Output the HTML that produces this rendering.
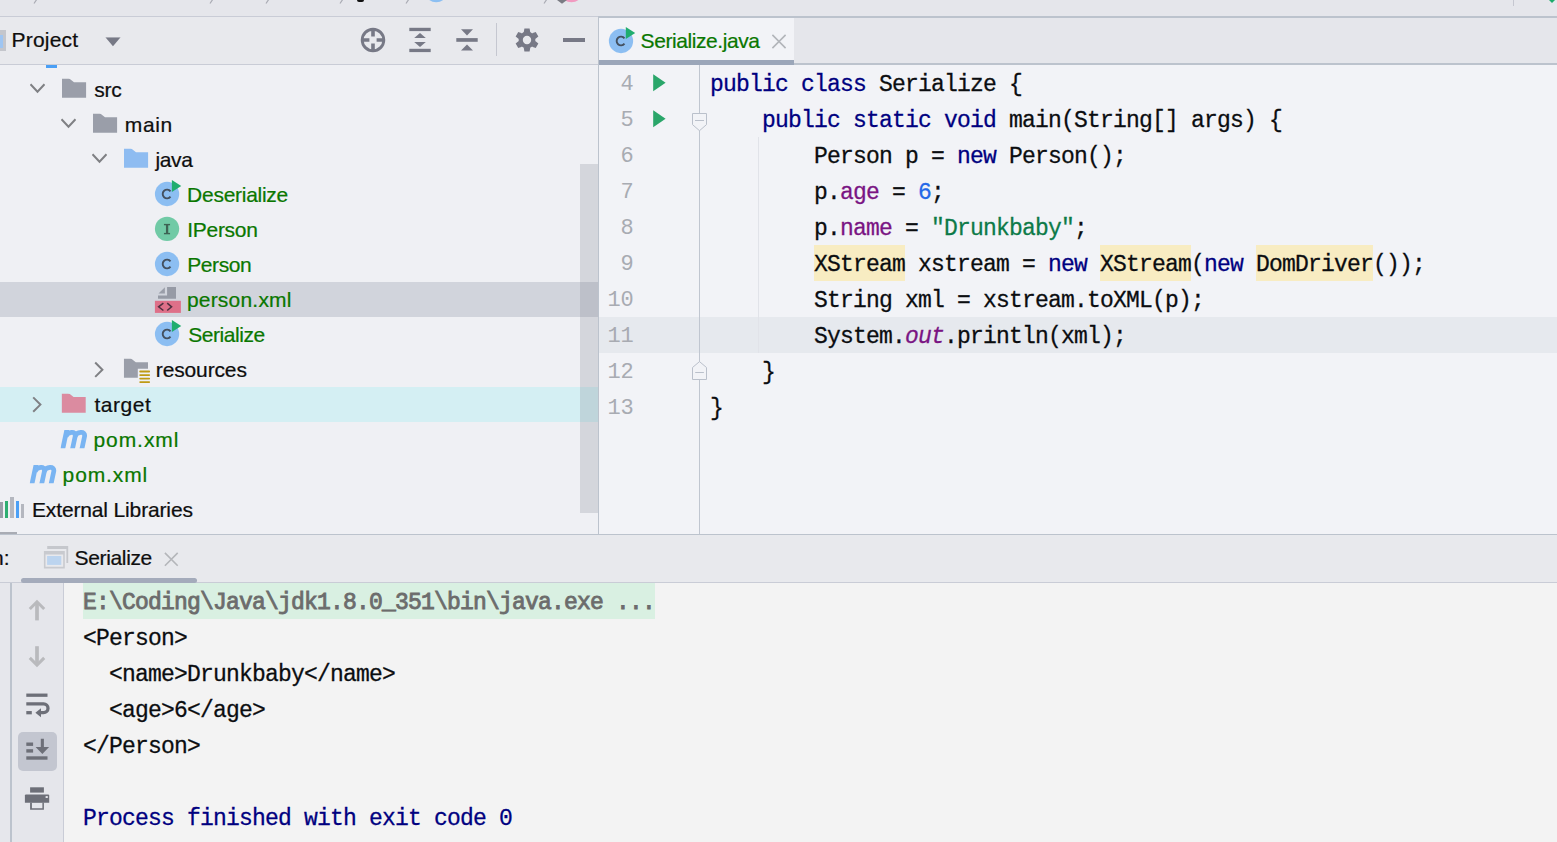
<!DOCTYPE html>
<html><head><meta charset="utf-8"><title>Serialize.java</title>
<style>
html,body{margin:0;padding:0}
body{width:1557px;height:842px;position:relative;overflow:hidden;background:#eff0f4;font-family:"Liberation Sans", sans-serif}
.r{position:absolute;display:block}
.t{position:absolute;white-space:pre;margin:0}
.s{font-family:"Liberation Sans", sans-serif;-webkit-text-stroke:0.22px}
.m{font-family:"Liberation Mono", monospace;-webkit-text-stroke:0.27px}
</style></head>
<body>
<div class="r" style="left:0px;top:0px;width:1557px;height:16px;background:#e5e6eb;"></div>
<div class="r" style="left:0px;top:17px;width:598px;height:47px;background:#e8e9ed;"></div>
<div class="r" style="left:0px;top:65px;width:598px;height:469px;background:#eff0f4;"></div>
<div class="r" style="left:599px;top:18px;width:958px;height:46px;background:#e5e6eb;"></div>
<div class="r" style="left:599px;top:65px;width:958px;height:469px;background:#f2f3f7;"></div>
<div class="r" style="left:0px;top:535px;width:1557px;height:47px;background:#e8e9ed;"></div>
<div class="r" style="left:0px;top:583px;width:10px;height:259px;background:#e6e7ec;"></div>
<div class="r" style="left:12px;top:583px;width:51px;height:259px;background:#e5e6eb;"></div>
<div class="r" style="left:64px;top:583px;width:1493px;height:259px;background:#f3f3f3;"></div>
<div class="r" style="left:0px;top:16px;width:598px;height:1px;background:#c9ccd6;"></div>
<div class="r" style="left:598px;top:16px;width:959px;height:2px;background:#bcc3cd;"></div>
<div class="r" style="left:0px;top:64px;width:598px;height:1px;background:#c9ccd6;"></div>
<div class="r" style="left:598px;top:16px;width:1px;height:518px;background:#bcc3cd;"></div>
<div class="r" style="left:599px;top:63px;width:958px;height:2px;background:#bcc3cd;"></div>
<div class="r" style="left:0px;top:534px;width:1557px;height:1px;background:#bcc3cd;"></div>
<div class="r" style="left:0px;top:582px;width:1557px;height:1px;background:#c9ccd6;"></div>
<div class="r" style="left:10px;top:583px;width:2px;height:259px;background:#bcc3cd;"></div>
<div class="r" style="left:63px;top:583px;width:1px;height:259px;background:#c9ccd6;"></div>
<svg class="r" style="left:33px;top:0px" width="8" height="4" viewBox="0 0 8 4"><path d="M1 3.5 L4 -1" stroke="#a9abb3" stroke-width="1.2" fill="none"/></svg>
<svg class="r" style="left:209px;top:0px" width="8" height="4" viewBox="0 0 8 4"><path d="M1 3.5 L4 -1" stroke="#a9abb3" stroke-width="1.2" fill="none"/></svg>
<svg class="r" style="left:265px;top:0px" width="8" height="4" viewBox="0 0 8 4"><path d="M1 3.5 L4 -1" stroke="#a9abb3" stroke-width="1.2" fill="none"/></svg>
<svg class="r" style="left:339px;top:0px" width="8" height="4" viewBox="0 0 8 4"><path d="M1 3.5 L4 -1" stroke="#a9abb3" stroke-width="1.2" fill="none"/></svg>
<svg class="r" style="left:405px;top:0px" width="8" height="4" viewBox="0 0 8 4"><path d="M1 3.5 L4 -1" stroke="#a9abb3" stroke-width="1.2" fill="none"/></svg>
<svg class="r" style="left:543px;top:0px" width="8" height="4" viewBox="0 0 8 4"><path d="M1 3.5 L4 -1" stroke="#a9abb3" stroke-width="1.2" fill="none"/></svg>
<div class="r" style="left:357px;top:0px;width:7px;height:2px;background:#111;border-radius:0 0 3px 3px"></div>
<svg class="r" style="left:426px;top:0px" width="22" height="4" viewBox="0 0 22 4"><circle cx="10.2" cy="-9.8" r="12" fill="#8cbff2"/></svg>
<svg class="r" style="left:556px;top:0px" width="26" height="5" viewBox="0 0 26 5"><circle cx="15.5" cy="-9.8" r="12" fill="#f19ac0"/><path d="M1 0 L11 0 L6 3.8 Z" fill="#7a7b83"/></svg>
<div class="r" style="left:1513px;top:0px;width:1px;height:6px;background:#c5c7d0;"></div>
<svg class="r" style="left:1548px;top:0px" width="9" height="3" viewBox="0 0 9 3"><path d="M1 0 L7 0 L4 3 Z" fill="#1daa6b"/></svg>
<div class="r" style="left:0px;top:30px;width:6px;height:21px;background:#c4c6cc;"></div>
<div class="r" style="left:0px;top:35px;width:3px;height:13px;background:#9ec5f2;"></div>
<svg class="r" style="left:104px;top:37px" width="19" height="11" viewBox="0 0 19 11"><svg x="0.6" y="0.2" width="18" height="10" viewBox="0 0 18 10"><path d="M0.8 0 L16 0 L8.4 9 Z" fill="#777986"/></svg></svg>
<svg class="r" style="left:360px;top:27px" width="26" height="26" viewBox="0 0 26 26"><g stroke="#777986" fill="none"><circle cx="13" cy="13" r="10.8" stroke-width="2.9"/><path d="M13 1.5 V9.4 M13 16.6 V24.5 M1.5 13 H9.4 M16.6 13 H24.5" stroke-width="3.6"/></g></svg>
<svg class="r" style="left:409px;top:27px" width="22" height="26" viewBox="0 0 22 26"><g fill="#777986"><rect x="0.3" y="0.8" width="21.4" height="3.3"/><rect x="0.3" y="21.8" width="21.4" height="3.3"/><path d="M11 5.9 L16.8 11 L5.2 11 Z"/><path d="M11 19.9 L16.8 14.9 L5.2 14.9 Z"/></g></svg>
<svg class="r" style="left:456px;top:27px" width="22" height="26" viewBox="0 0 22 26"><g fill="#777986"><rect x="0.3" y="11.1" width="21.4" height="3.7"/><path d="M5 2.2 L17 2.2 L11 8.4 Z"/><path d="M5 23.6 L17 23.6 L11 17.6 Z"/></g></svg>
<div class="r" style="left:496px;top:23px;width:1px;height:33px;background:#c5c7d0;"></div>
<svg class="r" style="left:514px;top:27px" width="26" height="26" viewBox="0 0 26 26"><g fill="#777986"><path d="M9.75 5.30 L10.40 1.40 L15.60 1.40 L16.25 5.30 Z M18.04 6.34 L21.75 4.95 L24.35 9.45 L21.29 11.96 Z M21.29 14.04 L24.35 16.55 L21.75 21.05 L18.04 19.66 Z M16.25 20.70 L15.60 24.60 L10.40 24.60 L9.75 20.70 Z M7.96 19.66 L4.25 21.05 L1.65 16.55 L4.71 14.04 Z M4.71 11.96 L1.65 9.45 L4.25 4.95 L7.96 6.34 Z "/></g><circle cx="13" cy="13" r="6.3" fill="none" stroke="#777986" stroke-width="4.2"/></svg>
<div class="r" style="left:563.2px;top:38.1px;width:21.6px;height:3.8px;background:#777986;"></div>
<div class="r" style="left:46px;top:65px;width:11px;height:3px;background:#4a9ff5;"></div>
<div class="r" style="left:0px;top:282px;width:598px;height:35px;background:#d1d4dc;"></div>
<div class="r" style="left:0px;top:387px;width:598px;height:35px;background:#d4eff3;"></div>
<div class="r" style="left:580px;top:164px;width:18px;height:349px;background:rgba(120,122,135,0.22);"></div>
<svg class="r" style="left:28px;top:82px" width="19" height="13" viewBox="0 0 19 13"><svg x="0.5" y="0.5" width="18" height="12" viewBox="0 0 18 12"><path d="M2 1.8 L9 9.2 L16 1.8" stroke="#7f8084" stroke-width="2" fill="none"/></svg></svg>
<svg class="r" style="left:62px;top:78px" width="25" height="21" viewBox="0 0 25 21"><svg x="0" y="0.5" width="25" height="20" viewBox="0 0 25 20"><path d="M0 0 H6.4 Q7.4 0 8.2 0.7 L12 3.65 H24.1 V19.3 H0 Z" fill="#9a9ea9"/></svg></svg>
<svg class="r" style="left:59px;top:117px" width="19" height="13" viewBox="0 0 19 13"><svg x="0.5" y="0.5" width="18" height="12" viewBox="0 0 18 12"><path d="M2 1.8 L9 9.2 L16 1.8" stroke="#7f8084" stroke-width="2" fill="none"/></svg></svg>
<svg class="r" style="left:93px;top:113px" width="25" height="21" viewBox="0 0 25 21"><svg x="0" y="0.5" width="25" height="20" viewBox="0 0 25 20"><path d="M0 0 H6.4 Q7.4 0 8.2 0.7 L12 3.65 H24.1 V19.3 H0 Z" fill="#9a9ea9"/></svg></svg>
<svg class="r" style="left:90px;top:152px" width="19" height="13" viewBox="0 0 19 13"><svg x="0.5" y="0.5" width="18" height="12" viewBox="0 0 18 12"><path d="M2 1.8 L9 9.2 L16 1.8" stroke="#7f8084" stroke-width="2" fill="none"/></svg></svg>
<svg class="r" style="left:124px;top:148px" width="25" height="21" viewBox="0 0 25 21"><svg x="0" y="0.5" width="25" height="20" viewBox="0 0 25 20"><path d="M0 0 H6.4 Q7.4 0 8.2 0.7 L12 3.65 H24.1 V19.3 H0 Z" fill="#8ebcf1"/></svg></svg>
<svg class="r" style="left:153px;top:178px" width="33" height="30" viewBox="0 0 33 30"><svg x="0.05" y="0" width="32" height="30" viewBox="0 0 32 30"><circle cx="14" cy="16" r="12.15" fill="#8cbef2"/><path d="M17.45 13.35 A4.35 4.35 0 1 0 17.45 18.65" stroke="#44505f" stroke-width="1.9" fill="none"/><path d="M18.8 2 L28.2 8 L18.8 14 Z" fill="#20ad6f"/></svg></svg>
<svg class="r" style="left:153px;top:212px" width="33" height="31" viewBox="0 0 33 31"><svg x="0.05" y="0.8" width="32" height="30" viewBox="0 0 32 30"><circle cx="14" cy="16" r="12.15" fill="#71caa6"/><g fill="#3e6354"><rect x="10.9" y="11.1" width="6.1" height="1.4"/><rect x="10.9" y="20.1" width="6.1" height="1.4"/><rect x="12.9" y="11.8" width="2.3" height="9"/></g></svg></svg>
<svg class="r" style="left:153px;top:248px" width="33" height="30" viewBox="0 0 33 30"><svg x="0.05" y="0" width="32" height="30" viewBox="0 0 32 30"><circle cx="14" cy="16" r="12.15" fill="#8cbef2"/><path d="M17.45 13.35 A4.35 4.35 0 1 0 17.45 18.65" stroke="#44505f" stroke-width="1.9" fill="none"/></svg></svg>
<svg class="r" style="left:154px;top:286px" width="28" height="28" viewBox="0 0 28 28"><path d="M13.1 0.9 H22 V12.8 H4 V9.6 H13.1 Z" fill="#969aa5"/><path d="M10.9 1.3 V7.6 H4.5 Z" fill="#9a9ea9"/><rect x="0.9" y="14.8" width="26" height="12.1" fill="#de7089"/><path d="M9.4 17.2 L4.6 20.85 L9.4 24.5 M13.2 17.2 L17.6 20.85 L13.2 24.5" stroke="#4e3040" stroke-width="1.5" fill="none"/></svg>
<svg class="r" style="left:153px;top:318px" width="33" height="30" viewBox="0 0 33 30"><svg x="0.05" y="0" width="32" height="30" viewBox="0 0 32 30"><circle cx="14" cy="16" r="12.15" fill="#8cbef2"/><path d="M17.45 13.35 A4.35 4.35 0 1 0 17.45 18.65" stroke="#44505f" stroke-width="1.9" fill="none"/><path d="M18.8 2 L28.2 8 L18.8 14 Z" fill="#20ad6f"/></svg></svg>
<svg class="r" style="left:93px;top:360px" width="12" height="19" viewBox="0 0 12 19"><svg x="0" y="0.7" width="12" height="18" viewBox="0 0 12 18"><path d="M2.2 1.8 L9.4 9 L2.2 16.2" stroke="#7f8084" stroke-width="2" fill="none"/></svg></svg>
<svg class="r" style="left:123px;top:358px" width="29" height="27" viewBox="0 0 29 27"><svg x="0.8" y="0.5" width="28" height="26" viewBox="0 0 28 26"><path d="M0 0 H6.4 Q7.4 0 8.2 0.7 L12 3.65 H24.2 V10.3 H14 V19.3 H0 Z" fill="#9a9ea9"/><g fill="#bf9a14"><rect x="15.5" y="12.1" width="10.8" height="1.8" rx="0.9"/><rect x="15.5" y="15.65" width="10.8" height="1.8" rx="0.9"/><rect x="15.5" y="19.2" width="10.8" height="1.8" rx="0.9"/><rect x="15.5" y="22.7" width="10.8" height="1.8" rx="0.9"/></g></svg></svg>
<svg class="r" style="left:31px;top:395px" width="12" height="19" viewBox="0 0 12 19"><svg x="0" y="0.6" width="12" height="18" viewBox="0 0 12 18"><path d="M2.2 1.8 L9.4 9 L2.2 16.2" stroke="#7f8084" stroke-width="2" fill="none"/></svg></svg>
<svg class="r" style="left:61px;top:393px" width="26" height="21" viewBox="0 0 26 21"><svg x="0.6" y="0.4" width="25" height="20" viewBox="0 0 25 20"><path d="M0 0 H6.4 Q7.4 0 8.2 0.7 L12 3.65 H24.1 V19.3 H0 Z" fill="#db8ba0"/></svg></svg>
<svg class="r" style="left:60px;top:429px" width="30" height="20" viewBox="0 0 30 20"><svg x="0.4" y="0.9" width="29" height="18.3" viewBox="0 0 29 18.3"><g fill="none" stroke="#79b4f2" stroke-width="4.7" stroke-linejoin="round"><path d="M1.9 21.3 L6.6 -1"/><path d="M5.4 6.6 C7.4 1.8 15.8 0.6 14.8 6.4 L11.6 21.3"/><path d="M14.4 6.6 C16.4 1.8 25.2 0.6 24.2 6.4 L21 21.3"/></g></svg></svg>
<svg class="r" style="left:29px;top:464px" width="30" height="20" viewBox="0 0 30 20"><svg x="0.6" y="0.9" width="29" height="18.3" viewBox="0 0 29 18.3"><g fill="none" stroke="#79b4f2" stroke-width="4.7" stroke-linejoin="round"><path d="M1.9 21.3 L6.6 -1"/><path d="M5.4 6.6 C7.4 1.8 15.8 0.6 14.8 6.4 L11.6 21.3"/><path d="M14.4 6.6 C16.4 1.8 25.2 0.6 24.2 6.4 L21 21.3"/></g></svg></svg>
<div class="r" style="left:0px;top:502.2px;width:2.7px;height:15.6px;background:#9a9ea9;"></div>
<div class="r" style="left:5px;top:500.5px;width:3.4px;height:17.3px;background:#2fae72;"></div>
<div class="r" style="left:10.2px;top:497px;width:3.5px;height:20.8px;background:#b4b7bf;"></div>
<div class="r" style="left:15.7px;top:500.5px;width:3.3px;height:17.3px;background:#4a9ff5;"></div>
<div class="r" style="left:21px;top:504.4px;width:3px;height:13.4px;background:#b4b7bf;"></div>
<div class="r" style="left:0px;top:532px;width:17px;height:2px;background:#a9acb4;"></div>
<div class="r" style="left:599px;top:18px;width:195px;height:42px;background:#f2f3f7;"></div>
<div class="r" style="left:599px;top:60px;width:195px;height:5px;background:#9ba6b9;"></div>
<svg class="r" style="left:607px;top:25px" width="32" height="30" viewBox="0 0 32 30"><circle cx="14" cy="16" r="12.15" fill="#8cbef2"/><path d="M17.45 13.35 A4.35 4.35 0 1 0 17.45 18.65" stroke="#44505f" stroke-width="1.9" fill="none"/><path d="M18.8 2 L28.2 8 L18.8 14 Z" fill="#20ad6f"/></svg>
<svg class="r" style="left:771px;top:33px" width="16" height="17" viewBox="0 0 16 17"><svg x="0" y="0.5" width="16" height="16" viewBox="0 0 16 16"><path d="M1.4 1.4 L14.6 14.6 M14.6 1.4 L1.4 14.6" stroke="#b2b5ba" stroke-width="1.6" fill="none"/></svg></svg>
<div class="r" style="left:599px;top:317px;width:958px;height:36px;background:#e6e9ee;"></div>
<div class="r" style="left:699px;top:65px;width:1px;height:469px;background:#c0c6d0;"></div>
<div class="r" style="left:758px;top:137px;width:1px;height:216px;background:#e1e3e9;"></div>
<div class="r" style="left:814px;top:245px;width:91px;height:36px;background:#f8ecc2;"></div>
<div class="r" style="left:1100px;top:245px;width:91px;height:36px;background:#f8ecc2;"></div>
<div class="r" style="left:1256px;top:245px;width:117px;height:36px;background:#f8ecc2;"></div>
<svg class="r" style="left:652px;top:73px" width="15" height="20" viewBox="0 0 15 20"><path d="M1.2 1.2 L13.6 9.7 L1.2 18.2 Z" fill="#2aa66a"/></svg>
<svg class="r" style="left:652px;top:109px" width="15" height="20" viewBox="0 0 15 20"><path d="M1.2 1.2 L13.6 9.7 L1.2 18.2 Z" fill="#2aa66a"/></svg>
<svg class="r" style="left:691px;top:112px" width="17" height="21" viewBox="0 0 17 21"><path d="M1.5 1.5 H15.5 V12.6 L8.5 18.7 L1.5 12.6 Z" fill="#f2f3f7" stroke="#bac0cb" stroke-width="1"/><path d="M4 8.5 H13" stroke="#bac0cb" stroke-width="1"/></svg>
<svg class="r" style="left:691px;top:360px" width="17" height="21" viewBox="0 0 17 21"><path d="M1.5 19.5 H15.5 V7.5 L8.5 1.6 L1.5 7.5 Z" fill="#f2f3f7" stroke="#bac0cb" stroke-width="1"/><path d="M4.2 12.5 H12.9" stroke="#bac0cb" stroke-width="1"/></svg>
<svg class="r" style="left:43px;top:545px" width="27" height="25" viewBox="0 0 27 25"><path d="M4.2 0.9 H25.2 V17.9 H23.4 V3.9 H4.2 Z" fill="#c5c7cc"/><path d="M0.9 6 H21.8 V23.4 H0.9 Z M2.5 9.4 V21.8 H20.2 V9.4 Z" fill="#c8cacf" fill-rule="evenodd"/><rect x="4.1" y="11" width="14.2" height="8.9" fill="#bcd4ef"/></svg>
<svg class="r" style="left:163px;top:551px" width="17" height="17" viewBox="0 0 17 17"><svg x="0.5" y="0.5" width="16" height="16" viewBox="0 0 16 16"><path d="M1.4 1.4 L14.2 14.2 M14.2 1.4 L1.4 14.2" stroke="#b4b6ba" stroke-width="1.6" fill="none"/></svg></svg>
<div class="r" style="left:21px;top:578px;width:176px;height:5px;background:#a4abbb;border-radius:2.5px"></div>
<svg class="r" style="left:27px;top:598px" width="20" height="24" viewBox="0 0 20 24"><g stroke="#b9babd" fill="none"><path d="M10 22.4 V5" stroke-width="3.7"/><path d="M2.8 11 L10 3.8 L17.2 11" stroke-width="3"/></g></svg>
<svg class="r" style="left:27px;top:645px" width="20" height="24" viewBox="0 0 20 24"><g stroke="#b9babd" fill="none"><path d="M10 1.2 V19" stroke-width="3.7"/><path d="M2.8 12.9 L10 20.1 L17.2 12.9" stroke-width="3"/></g></svg>
<svg class="r" style="left:25px;top:692px" width="26" height="27" viewBox="0 0 26 27"><g fill="none" stroke="#6d6f78" stroke-width="3.3"><path d="M1.3 3.2 H22.5"/><path d="M1.3 11.9 H18.6 A4.4 4.4 0 0 1 18.6 20.7 H15.4"/><path d="M1.3 20.7 H6.8"/></g><path d="M10.4 20.7 L16 16.2 V25.2 Z" fill="#6d6f78"/></svg>
<div class="r" style="left:18px;top:732px;width:39px;height:39px;background:#c3c6d0;border-radius:5px"></div>
<svg class="r" style="left:25px;top:738px" width="26" height="24" viewBox="0 0 26 24"><g fill="#6d6f78"><rect x="1.3" y="4.5" width="6.8" height="3.4"/><rect x="1.3" y="11.2" width="6.8" height="3.4"/><rect x="1.3" y="18.3" width="21.2" height="3.4"/></g><path d="M15.8 0.8 H18.9 V9 H24.1 L17.35 16 L10.6 9 H15.8 Z" fill="#6d6f78"/></svg>
<svg class="r" style="left:24px;top:786px" width="26" height="26" viewBox="0 0 26 26"><g fill="#6d6f78"><rect x="6.1" y="1.3" width="13.8" height="5.3"/><path d="M2 8.5 H24.1 Q25.2 8.5 25.2 9.6 V16.8 H0.9 V9.6 Q0.9 8.5 2 8.5 Z"/><path d="M6.1 16.6 H19.9 V23.8 H6.1 Z M7.9 16.8 V22.2 H18.4 V16.8 Z" fill-rule="evenodd"/></g><rect x="21.6" y="10.1" width="2.2" height="1.9" fill="#e5e6eb"/></svg>
<div class="r" style="left:83px;top:583px;width:572px;height:36px;background:#d9f0e2;"></div>
<div class="t s" style="left:11.50px;top:25.32px;font-size:21px;color:#0e0e0e;line-height:30px;letter-spacing:0.196px;">Project</div>
<div class="t s" style="left:94.30px;top:74.62px;font-size:21px;color:#0e0e0e;line-height:30px;letter-spacing:-0.297px;">src</div>
<div class="t s" style="left:124.80px;top:109.62px;font-size:21px;color:#0e0e0e;line-height:30px;letter-spacing:0.654px;">main</div>
<div class="t s" style="left:155.60px;top:144.62px;font-size:21px;color:#0e0e0e;line-height:30px;letter-spacing:-0.415px;">java</div>
<div class="t s" style="left:187.10px;top:179.62px;font-size:21px;color:#0a7700;line-height:30px;letter-spacing:-0.269px;">Deserialize</div>
<div class="t s" style="left:187.30px;top:214.62px;font-size:21px;color:#0a7700;line-height:30px;letter-spacing:-0.299px;">IPerson</div>
<div class="t s" style="left:187.30px;top:249.62px;font-size:21px;color:#0a7700;line-height:30px;letter-spacing:-0.432px;">Person</div>
<div class="t s" style="left:186.90px;top:284.62px;font-size:21px;color:#0a7700;line-height:30px;letter-spacing:0.207px;">person.xml</div>
<div class="t s" style="left:188.20px;top:319.62px;font-size:21px;color:#0a7700;line-height:30px;letter-spacing:-0.444px;">Serialize</div>
<div class="t s" style="left:155.80px;top:354.62px;font-size:21px;color:#0e0e0e;line-height:30px;letter-spacing:-0.138px;">resources</div>
<div class="t s" style="left:94.40px;top:389.62px;font-size:21px;color:#0e0e0e;line-height:30px;letter-spacing:0.567px;">target</div>
<div class="t s" style="left:93.40px;top:424.62px;font-size:21px;color:#0a7700;line-height:30px;letter-spacing:0.953px;">pom.xml</div>
<div class="t s" style="left:62.60px;top:459.62px;font-size:21px;color:#0a7700;line-height:30px;letter-spacing:0.870px;">pom.xml</div>
<div class="t s" style="left:32.00px;top:494.62px;font-size:21px;color:#0e0e0e;line-height:30px;letter-spacing:-0.147px;">External Libraries</div>
<div class="t s" style="left:640.60px;top:26.22px;font-size:21px;color:#0a7700;line-height:30px;letter-spacing:-0.424px;">Serialize.java</div>
<div class="t m" style="left:710.00px;top:70.07px;font-size:23px;color:#0e0e0e;line-height:30px;letter-spacing:-0.802px;"><span style="color:#000080;">public class </span><span style="color:#0b0d10;">Serialize {</span></div>
<div class="t m" style="left:620.40px;top:70.33px;font-size:22px;color:#a8abb2;line-height:30px;letter-spacing:-0.202px;-webkit-text-stroke:0px;">4</div>
<div class="t m" style="left:762.00px;top:106.07px;font-size:23px;color:#0e0e0e;line-height:30px;letter-spacing:-0.802px;"><span style="color:#000080;">public static void </span><span style="color:#0b0d10;">main(String[] args) {</span></div>
<div class="t m" style="left:620.40px;top:106.33px;font-size:22px;color:#a8abb2;line-height:30px;letter-spacing:-0.202px;-webkit-text-stroke:0px;">5</div>
<div class="t m" style="left:814.00px;top:142.07px;font-size:23px;color:#0e0e0e;line-height:30px;letter-spacing:-0.802px;"><span style="color:#0b0d10;">Person p = </span><span style="color:#000080;">new </span><span style="color:#0b0d10;">Person();</span></div>
<div class="t m" style="left:620.40px;top:142.33px;font-size:22px;color:#a8abb2;line-height:30px;letter-spacing:-0.202px;-webkit-text-stroke:0px;">6</div>
<div class="t m" style="left:814.00px;top:178.07px;font-size:23px;color:#0e0e0e;line-height:30px;letter-spacing:-0.802px;"><span style="color:#0b0d10;">p.</span><span style="color:#7a1483;">age</span><span style="color:#0b0d10;"> = </span><span style="color:#2468e8;">6</span><span style="color:#0b0d10;">;</span></div>
<div class="t m" style="left:620.40px;top:178.33px;font-size:22px;color:#a8abb2;line-height:30px;letter-spacing:-0.202px;-webkit-text-stroke:0px;">7</div>
<div class="t m" style="left:814.00px;top:214.07px;font-size:23px;color:#0e0e0e;line-height:30px;letter-spacing:-0.802px;"><span style="color:#0b0d10;">p.</span><span style="color:#7a1483;">name</span><span style="color:#0b0d10;"> = </span><span style="color:#0d7a48;">"Drunkbaby"</span><span style="color:#0b0d10;">;</span></div>
<div class="t m" style="left:620.40px;top:214.33px;font-size:22px;color:#a8abb2;line-height:30px;letter-spacing:-0.202px;-webkit-text-stroke:0px;">8</div>
<div class="t m" style="left:814.00px;top:250.07px;font-size:23px;color:#0e0e0e;line-height:30px;letter-spacing:-0.802px;"><span style="color:#0b0d10;">XStream xstream = </span><span style="color:#000080;">new </span><span style="color:#0b0d10;">XStream(</span><span style="color:#000080;">new </span><span style="color:#0b0d10;">DomDriver());</span></div>
<div class="t m" style="left:620.40px;top:250.33px;font-size:22px;color:#a8abb2;line-height:30px;letter-spacing:-0.202px;-webkit-text-stroke:0px;">9</div>
<div class="t m" style="left:814.00px;top:286.07px;font-size:23px;color:#0e0e0e;line-height:30px;letter-spacing:-0.802px;"><span style="color:#0b0d10;">String xml = xstream.toXML(p);</span></div>
<div class="t m" style="left:607.40px;top:286.33px;font-size:22px;color:#a8abb2;line-height:30px;letter-spacing:-0.202px;-webkit-text-stroke:0px;">10</div>
<div class="t m" style="left:814.00px;top:322.07px;font-size:23px;color:#0e0e0e;line-height:30px;letter-spacing:-0.802px;"><span style="color:#0b0d10;">System.</span><span style="color:#7a1483;font-style:italic;">out</span><span style="color:#0b0d10;">.println(xml);</span></div>
<div class="t m" style="left:607.40px;top:322.33px;font-size:22px;color:#a8abb2;line-height:30px;letter-spacing:-0.202px;-webkit-text-stroke:0px;">11</div>
<div class="t m" style="left:762.00px;top:358.07px;font-size:23px;color:#0e0e0e;line-height:30px;letter-spacing:-0.802px;"><span style="color:#0b0d10;">}</span></div>
<div class="t m" style="left:607.40px;top:358.33px;font-size:22px;color:#a8abb2;line-height:30px;letter-spacing:-0.202px;-webkit-text-stroke:0px;">12</div>
<div class="t m" style="left:710.00px;top:394.07px;font-size:23px;color:#0e0e0e;line-height:30px;letter-spacing:-0.802px;"><span style="color:#0b0d10;">}</span></div>
<div class="t m" style="left:607.40px;top:394.33px;font-size:22px;color:#a8abb2;line-height:30px;letter-spacing:-0.202px;-webkit-text-stroke:0px;">13</div>
<div class="t s" style="left:-7.90px;top:543.32px;font-size:21px;color:#0e0e0e;line-height:30px;">n:</div>
<div class="t s" style="left:74.60px;top:543.32px;font-size:21px;color:#0e0e0e;line-height:30px;letter-spacing:-0.357px;">Serialize</div>
<div class="t m" style="left:83.00px;top:588.17px;font-size:23px;color:#6c6c6c;line-height:30px;letter-spacing:-0.802px;-webkit-text-stroke:0.85px;">E:\Coding\Java\jdk1.8.0_351\bin\java.exe ...</div>
<div class="t m" style="left:83.00px;top:624.17px;font-size:23px;color:#0b0d10;line-height:30px;letter-spacing:-0.802px;">&lt;Person&gt;</div>
<div class="t m" style="left:83.00px;top:660.17px;font-size:23px;color:#0b0d10;line-height:30px;letter-spacing:-0.802px;">  &lt;name&gt;Drunkbaby&lt;/name&gt;</div>
<div class="t m" style="left:83.00px;top:696.17px;font-size:23px;color:#0b0d10;line-height:30px;letter-spacing:-0.802px;">  &lt;age&gt;6&lt;/age&gt;</div>
<div class="t m" style="left:83.00px;top:732.17px;font-size:23px;color:#0b0d10;line-height:30px;letter-spacing:-0.802px;">&lt;/Person&gt;</div>
<div class="t m" style="left:83.00px;top:804.17px;font-size:23px;color:#000080;line-height:30px;letter-spacing:-0.802px;">Process finished with exit code 0</div>
</body></html>
